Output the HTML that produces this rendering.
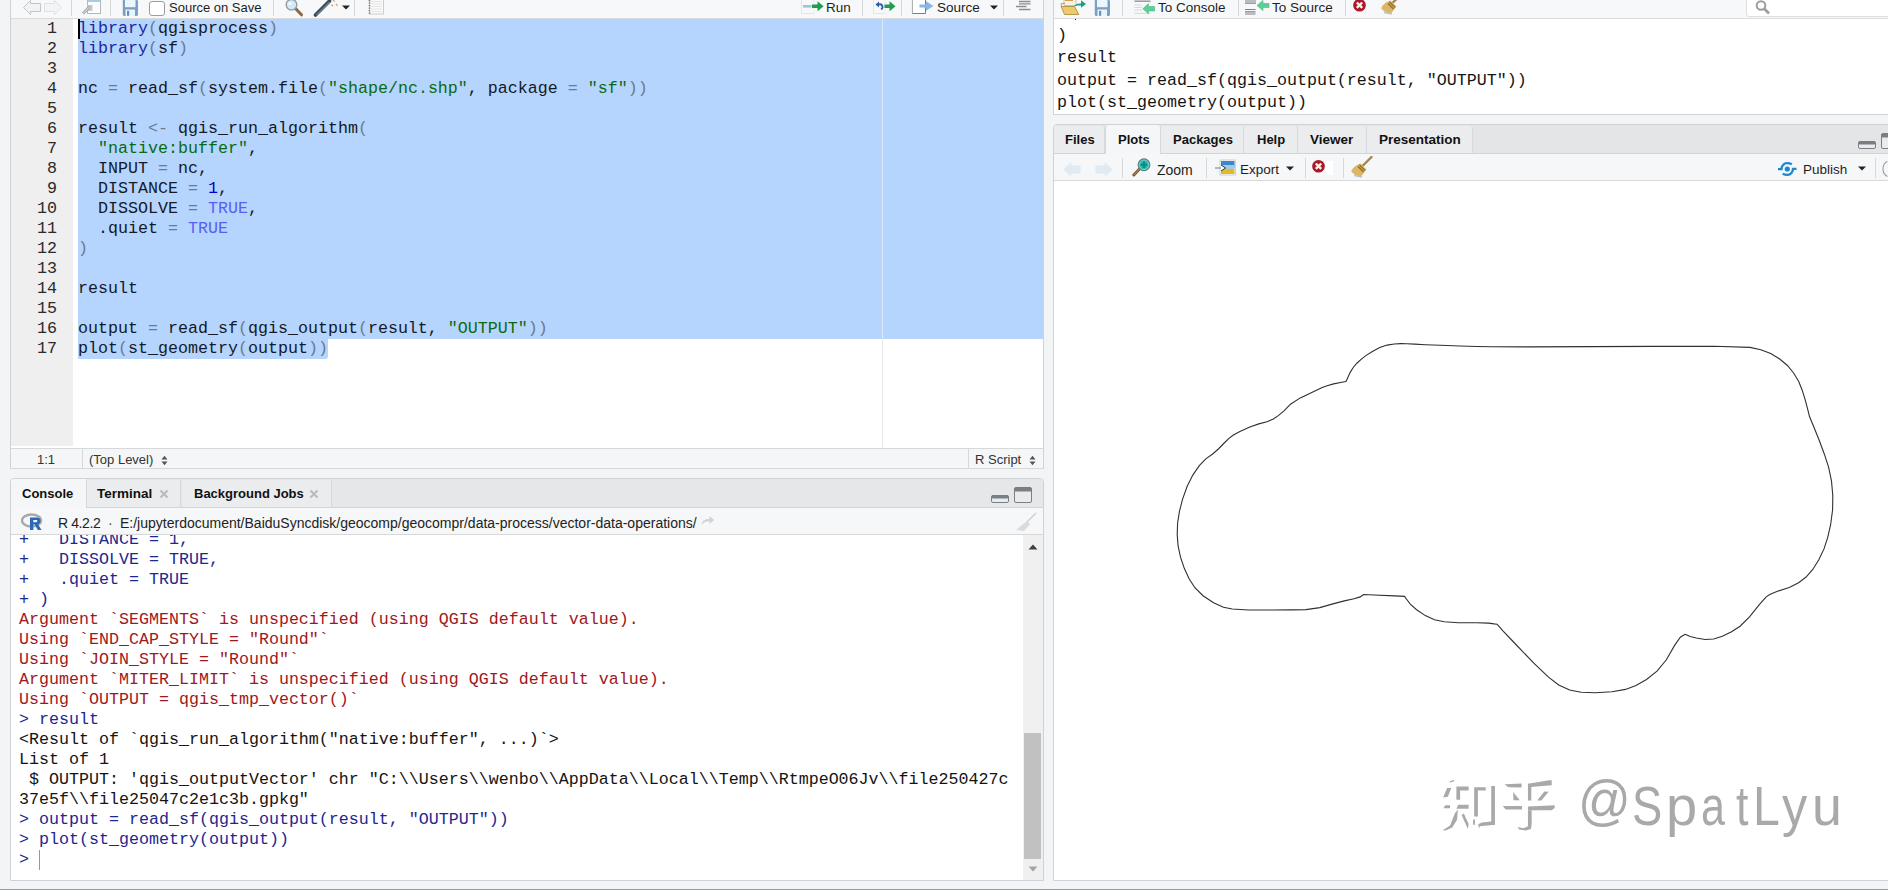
<!DOCTYPE html>
<html><head><meta charset="utf-8"><title>RStudio</title><style>
*{margin:0;padding:0;box-sizing:border-box}
html,body{width:1888px;height:890px;overflow:hidden;background:#f3f4f5;position:relative}
body{font-family:"Liberation Sans",sans-serif}
div,span,svg{position:absolute}
span.c{position:static}
.mono{font-family:"Liberation Mono",monospace;font-size:16.67px;white-space:pre;line-height:20px}
.ui{font-family:"Liberation Sans",sans-serif;font-size:13px;color:#1e1e1e;white-space:pre;line-height:16px}
.tabt{font-family:"Liberation Sans",sans-serif;font-size:13px;font-weight:bold;color:#111;white-space:pre;line-height:16px}
.kw{color:#1a28a0}.op{color:#6b7a8c}.str{color:#0a6a10}.num{color:#0000cd}.cst{color:#5a5ef0}.id{color:#141a28}
.in{color:#1c2890}.err{color:#a0181d}.out{color:#141414}
.sep{width:1px;background:#d8dadc}
.wm{font-family:"Liberation Sans",sans-serif;font-size:56px;line-height:56px;color:#a9a9a9;transform-origin:0 0;white-space:pre}
.ln{left:0;width:46px;text-align:right;color:#2a2a2a}
</style></head><body>
<div style="left:10px;top:-1px;width:1034px;height:470px;border:1px solid #d0d2d5;background:#fff"></div>
<div style="left:11px;top:0px;width:1032px;height:19px;background:#f6f8f9;border-bottom:1px solid #d9dbdd"></div>
<div style="left:11px;top:19px;width:62px;height:427px;background:#efefef"></div>
<div style="left:78px;top:19px;width:965px;height:320px;background:#b5d5ff"></div>
<div style="left:78px;top:339px;width:250px;height:20px;background:#b5d5ff;border-radius:0 0 3px 0"></div>
<div style="left:78px;top:19px;width:2px;height:20px;background:#000"></div>
<div class="mono" style="left:11px;top:19px;width:62px;height:400px"><div class="ln" style="top:0px">1</div><div class="ln" style="top:20px">2</div><div class="ln" style="top:40px">3</div><div class="ln" style="top:60px">4</div><div class="ln" style="top:80px">5</div><div class="ln" style="top:100px">6</div><div class="ln" style="top:120px">7</div><div class="ln" style="top:140px">8</div><div class="ln" style="top:160px">9</div><div class="ln" style="top:180px">10</div><div class="ln" style="top:200px">11</div><div class="ln" style="top:220px">12</div><div class="ln" style="top:240px">13</div><div class="ln" style="top:260px">14</div><div class="ln" style="top:280px">15</div><div class="ln" style="top:300px">16</div><div class="ln" style="top:320px">17</div></div>
<div class="mono" style="left:78px;top:19px;width:960px;height:400px"><div style="left:0;top:0px"><span class="c kw">library</span><span class="c op">(</span><span class="c id">qgisprocess</span><span class="c op">)</span></div><div style="left:0;top:20px"><span class="c kw">library</span><span class="c op">(</span><span class="c id">sf</span><span class="c op">)</span></div><div style="left:0;top:60px"><span class="c id">nc </span><span class="c op">=</span><span class="c id"> read_sf</span><span class="c op">(</span><span class="c id">system.file</span><span class="c op">(</span><span class="c str">&quot;shape/nc.shp&quot;</span><span class="c id">, package </span><span class="c op">=</span><span class="c id"> </span><span class="c str">&quot;sf&quot;</span><span class="c op">))</span></div><div style="left:0;top:100px"><span class="c id">result </span><span class="c op">&lt;-</span><span class="c id"> qgis_run_algorithm</span><span class="c op">(</span></div><div style="left:0;top:120px"><span class="c id">  </span><span class="c str">&quot;native:buffer&quot;</span><span class="c id">,</span></div><div style="left:0;top:140px"><span class="c id">  INPUT </span><span class="c op">=</span><span class="c id"> nc,</span></div><div style="left:0;top:160px"><span class="c id">  DISTANCE </span><span class="c op">=</span><span class="c id"> </span><span class="c num">1</span><span class="c id">,</span></div><div style="left:0;top:180px"><span class="c id">  DISSOLVE </span><span class="c op">=</span><span class="c id"> </span><span class="c cst">TRUE</span><span class="c id">,</span></div><div style="left:0;top:200px"><span class="c id">  .quiet </span><span class="c op">=</span><span class="c id"> </span><span class="c cst">TRUE</span></div><div style="left:0;top:220px"><span class="c op">)</span></div><div style="left:0;top:260px"><span class="c id">result</span></div><div style="left:0;top:300px"><span class="c id">output </span><span class="c op">=</span><span class="c id"> read_sf</span><span class="c op">(</span><span class="c id">qgis_output</span><span class="c op">(</span><span class="c id">result, </span><span class="c str">&quot;OUTPUT&quot;</span><span class="c op">))</span></div><div style="left:0;top:320px"><span class="c id">plot</span><span class="c op">(</span><span class="c id">st_geometry</span><span class="c op">(</span><span class="c id">output</span><span class="c op">))</span></div></div>
<div style="left:882px;top:19px;width:1px;height:320px;background:#dce8f8"></div>
<div style="left:882px;top:339px;width:1px;height:109px;background:#e6e7e8"></div>
<div style="left:11px;top:448px;width:1032px;height:21px;background:#f4f6f7;border-top:1px solid #d6d8da;border-bottom:1px solid #d6d8da"></div>
<div style="left:82px;top:449px;width:1px;height:19px;background:#d6d8da"></div>
<div style="left:968px;top:449px;width:1px;height:19px;background:#d6d8da"></div>
<div class="ui" style="left:37px;top:452px;color:#333">1:1</div>
<div class="ui" style="left:89px;top:452px;color:#333">(Top Level)</div>
<div class="ui" style="left:975px;top:452px;color:#333">R Script</div>
<svg style="left:161px;top:455px" width="7" height="11" viewBox="0 0 7 11"><path d="M0.5 4.5L3.5 0.8L6.5 4.5Z M0.5 6.5L3.5 10.2L6.5 6.5Z" fill="#555"/></svg>
<svg style="left:1029px;top:455px" width="7" height="11" viewBox="0 0 7 11"><path d="M0.5 4.5L3.5 0.8L6.5 4.5Z M0.5 6.5L3.5 10.2L6.5 6.5Z" fill="#555"/></svg>
<div style="left:71px;top:0px;width:1px;height:16px;background:#d5d7d9"></div>
<div style="left:110px;top:0px;width:1px;height:16px;background:#d5d7d9"></div>
<div style="left:273px;top:0px;width:1px;height:16px;background:#d5d7d9"></div>
<div style="left:354px;top:0px;width:1px;height:16px;background:#d5d7d9"></div>
<div style="left:862px;top:0px;width:1px;height:16px;background:#d5d7d9"></div>
<div style="left:901px;top:0px;width:1px;height:16px;background:#d5d7d9"></div>
<div style="left:1003px;top:0px;width:1px;height:16px;background:#d5d7d9"></div>
<div class="ui" style="left:169px;top:0px;font-size:13px">Source on Save</div>
<div style="left:149px;top:1px;width:16px;height:15px;background:#fff;border:1px solid #9a9ea2;border-radius:3px"></div>
<div class="ui" style="left:826px;top:0px;font-size:13.5px">Run</div>
<div class="ui" style="left:937px;top:0px;font-size:13.5px">Source</div>
<svg style="left:342px;top:5px" width="8" height="5" viewBox="0 0 8 5"><path d="M0 0.5H8L4 4.5Z" fill="#222"/></svg>
<svg style="left:990px;top:5px" width="8" height="5" viewBox="0 0 8 5"><path d="M0 0.5H8L4 4.5Z" fill="#222"/></svg>
<div style="left:10px;top:478px;width:1034px;height:403px;border:1px solid #d0d2d5;border-radius:4px 4px 0 0;background:#fff"></div>
<div style="left:11px;top:479px;width:1032px;height:28px;background:#e5e7e9;border-radius:3px 3px 0 0"></div>
<div style="left:11px;top:507px;width:1032px;height:1px;background:#d2d4d6"></div>
<div style="left:11px;top:479px;width:75px;height:29px;background:#f4f6f7;border-radius:3px 0 0 0"></div>
<div style="left:86px;top:480px;width:95px;height:27px;background:#ebecee;border-right:1px solid #d6d8da;border-left:1px solid #d6d8da"></div>
<div style="left:182px;top:480px;width:150px;height:27px;background:#ebecee;border-right:1px solid #d6d8da"></div>
<div class="tabt" style="left:22px;top:486px;">Console</div>
<div class="tabt" style="left:97px;top:486px;font-size:13.5px">Terminal</div>
<div class="tabt" style="left:194px;top:486px;">Background Jobs</div>
<svg style="left:159px;top:489px" width="10" height="10" viewBox="0 0 10 10"><path d="M1.5 1.5L8.5 8.5M8.5 1.5L1.5 8.5" stroke="#b8babc" stroke-width="2"/></svg>
<svg style="left:309px;top:489px" width="10" height="10" viewBox="0 0 10 10"><path d="M1.5 1.5L8.5 8.5M8.5 1.5L1.5 8.5" stroke="#b8babc" stroke-width="2"/></svg>
<svg style="left:991px;top:487px" width="42" height="17" viewBox="0 0 42 17"><rect x="0.5" y="8.5" width="17" height="7" rx="1.5" fill="#e9ecee" stroke="#7a7f83"/><rect x="0.5" y="8.5" width="17" height="3" rx="1" fill="#7a7f83"/><rect x="23.5" y="0.5" width="17" height="15" rx="1.5" fill="#e9ecee" stroke="#7a7f83"/><rect x="23.5" y="0.5" width="17" height="4" rx="1" fill="#7a7f83"/></svg>
<div style="left:11px;top:508px;width:1032px;height:27px;background:#f5f7f8"></div>
<div style="left:11px;top:534px;width:1032px;height:1px;background:#d6d8da"></div>
<svg style="left:21px;top:513px" width="22" height="18" viewBox="0 0 22 18"><ellipse cx="10.5" cy="7.5" rx="9.5" ry="6" fill="none" stroke="#a7a9ad" stroke-width="2.4"/><path d="M9 4.5H15.5C18.5 4.5 19.5 6 19.5 8C19.5 9.6 18.5 10.8 17 11.2L20.5 17H16.8L13.8 11.6H12.3V17H9Z M12.3 7V9.3H15C16 9.3 16.4 8.8 16.4 8.1C16.4 7.4 16 7 15 7Z" fill="#2a67b4" fill-rule="evenodd"/></svg>
<div class="ui" style="left:58px;top:515px;font-size:14px;letter-spacing:-0.4px;color:#222">R 4.2.2</div>
<div class="ui" style="left:108px;top:515px;font-size:14px;color:#444">·</div>
<div class="ui" style="left:120px;top:515px;font-size:14px;color:#222">E:/jupyterdocument/BaiduSyncdisk/geocomp/geocompr/data-process/vector-data-operations/</div>
<svg style="left:700px;top:515px" width="15" height="11" viewBox="0 0 15 11"><path d="M1.5 10C2 5.5 5 4 9.5 4V1L14 5L9.5 9V6.3C6 6.3 3.5 7.3 1.5 10Z" fill="#d0d3d6"/></svg>
<svg style="left:1012px;top:512px" width="26" height="20" viewBox="0 0 26 20"><path d="M24 1L15 10" stroke="#cfd2d4" stroke-width="1.6"/><path d="M15 9L18 12L12 19L4 18Z" fill="#d9dcde"/></svg>
<div style="left:11px;top:535px;width:1012px;height:345px;overflow:hidden;background:#fff"><div class="mono" style="left:8px;top:-5px;width:1000px;height:360px"><div class="in" style="left:0;top:0px">+   DISTANCE = 1,</div><div class="in" style="left:0;top:20px">+   DISSOLVE = TRUE,</div><div class="in" style="left:0;top:40px">+   .quiet = TRUE</div><div class="in" style="left:0;top:60px">+ )</div><div class="err" style="left:0;top:80px">Argument `SEGMENTS` is unspecified (using QGIS default value).</div><div class="err" style="left:0;top:100px">Using `END_CAP_STYLE = &quot;Round&quot;`</div><div class="err" style="left:0;top:120px">Using `JOIN_STYLE = &quot;Round&quot;`</div><div class="err" style="left:0;top:140px">Argument `MITER_LIMIT` is unspecified (using QGIS default value).</div><div class="err" style="left:0;top:160px">Using `OUTPUT = qgis_tmp_vector()`</div><div class="in" style="left:0;top:180px">&gt; result</div><div class="out" style="left:0;top:200px">&lt;Result of `qgis_run_algorithm(&quot;native:buffer&quot;, ...)`&gt;</div><div class="out" style="left:0;top:220px">List of 1</div><div class="out" style="left:0;top:240px"> $ OUTPUT: &#x27;qgis_outputVector&#x27; chr &quot;C:\\Users\\wenbo\\AppData\\Local\\Temp\\RtmpeO06Jv\\file250427c</div><div class="out" style="left:0;top:260px">37e5f\\file25047c2e1c3b.gpkg&quot;</div><div class="in" style="left:0;top:280px">&gt; output = read_sf(qgis_output(result, &quot;OUTPUT&quot;))</div><div class="in" style="left:0;top:300px">&gt; plot(st_geometry(output))</div><div class="in" style="left:0;top:320px">&gt; </div></div></div>
<div style="left:39px;top:850px;width:1px;height:20px;background:#999"></div>
<div style="left:1023px;top:535px;width:20px;height:345px;background:#f0f0f0"></div>
<div style="left:1024px;top:733px;width:17px;height:126px;background:#c1c1c1"></div>
<svg style="left:1028px;top:544px" width="10" height="6" viewBox="0 0 10 6"><path d="M0.5 5.5H9.5L5 0.5Z" fill="#404040"/></svg>
<svg style="left:1028px;top:866px" width="10" height="6" viewBox="0 0 10 6"><path d="M0.5 0.5H9.5L5 5.5Z" fill="#a3a3a3"/></svg>
<div style="left:1053px;top:-1px;width:840px;height:116px;border:1px solid #d0d2d5;background:#fff"></div>
<div style="left:1054px;top:0px;width:834px;height:19px;background:#f6f8f9;border-bottom:1px solid #d9dbdd"></div>
<div style="left:1122px;top:0px;width:1px;height:16px;background:#d5d7d9"></div>
<div style="left:1238px;top:0px;width:1px;height:16px;background:#d5d7d9"></div>
<div style="left:1345px;top:0px;width:1px;height:16px;background:#d5d7d9"></div>
<div class="ui" style="left:1158px;top:0px;font-size:13.5px">To Console</div>
<div class="ui" style="left:1272px;top:0px;font-size:13.5px">To Source</div>
<div style="left:1746px;top:-1px;width:150px;height:18px;background:#fff;border:1px solid #dcdee0;border-radius:0 0 0 3px"></div>
<svg style="left:1755px;top:0px" width="17" height="15" viewBox="0 0 17 15"><circle cx="6" cy="5.5" r="4.3" fill="none" stroke="#9a9da0" stroke-width="2"/><path d="M9 8.5L14 13.5" stroke="#9a9da0" stroke-width="2.6"/></svg>
<div style="left:1075px;top:19px;width:1px;height:1px;background:#222"></div>
<div class="mono" style="left:1057px;top:26px;color:#151515">)</div>
<div class="mono" style="left:1057px;top:48px;color:#151515">result</div>
<div class="mono" style="left:1057px;top:71px;color:#151515">output = read_sf(qgis_output(result, &quot;OUTPUT&quot;))</div>
<div class="mono" style="left:1057px;top:93px;color:#151515">plot(st_geometry(output))</div>
<div style="left:1053px;top:124px;width:840px;height:757px;border:1px solid #d0d2d5;border-radius:4px 0 0 0;background:#fff"></div>
<div style="left:1054px;top:125px;width:834px;height:28px;background:#e3e5e7;border-radius:3px 0 0 0"></div>
<div style="left:1054px;top:153px;width:834px;height:1px;background:#d2d4d6"></div>
<div style="left:1054px;top:126px;width:51px;height:27px;background:#ebecee;border-right:1px solid #d6d8da;border-radius:3px 3px 0 0"></div>
<div class="tabt" style="left:1065px;top:132px;">Files</div>
<div style="left:1105px;top:125px;width:56px;height:29px;background:#f4f6f7;border-left:1px solid #d6d8da;border-right:1px solid #d6d8da;border-radius:3px 3px 0 0"></div>
<div class="tabt" style="left:1118px;top:132px;">Plots</div>
<div style="left:1161px;top:126px;width:83px;height:27px;background:#ebecee;border-right:1px solid #d6d8da;border-radius:3px 3px 0 0"></div>
<div class="tabt" style="left:1173px;top:132px;">Packages</div>
<div style="left:1244px;top:126px;width:54px;height:27px;background:#ebecee;border-right:1px solid #d6d8da;border-radius:3px 3px 0 0"></div>
<div class="tabt" style="left:1257px;top:132px;">Help</div>
<div style="left:1298px;top:126px;width:69px;height:27px;background:#ebecee;border-right:1px solid #d6d8da;border-radius:3px 3px 0 0"></div>
<div class="tabt" style="left:1310px;top:132px;font-size:13.5px">Viewer</div>
<div style="left:1367px;top:126px;width:106px;height:27px;background:#ebecee;border-right:1px solid #d6d8da;border-radius:3px 3px 0 0"></div>
<div class="tabt" style="left:1379px;top:132px;font-size:13.5px">Presentation</div>
<svg style="left:1858px;top:133px" width="42" height="17" viewBox="0 0 42 17"><rect x="0.5" y="8.5" width="17" height="7" rx="1.5" fill="#e9ecee" stroke="#7a7f83"/><rect x="0.5" y="8.5" width="17" height="3" rx="1" fill="#7a7f83"/><rect x="23.5" y="0.5" width="17" height="15" rx="1.5" fill="#e9ecee" stroke="#7a7f83"/><rect x="23.5" y="0.5" width="17" height="4" rx="1" fill="#7a7f83"/></svg>
<div style="left:1054px;top:154px;width:834px;height:26px;background:#f5f7f8"></div>
<div style="left:1054px;top:180px;width:834px;height:1px;background:#d6d8da"></div>
<div style="left:1122px;top:158px;width:1px;height:20px;background:#d5d7d9"></div>
<div style="left:1206px;top:158px;width:1px;height:20px;background:#d5d7d9"></div>
<div style="left:1305px;top:158px;width:1px;height:20px;background:#d5d7d9"></div>
<div style="left:1343px;top:158px;width:1px;height:20px;background:#d5d7d9"></div>
<div style="left:1875px;top:158px;width:1px;height:20px;background:#d5d7d9"></div>
<div class="ui" style="left:1157px;top:162px;font-size:14px">Zoom</div>
<div class="ui" style="left:1240px;top:162px;font-size:13.5px">Export</div>
<div class="ui" style="left:1803px;top:162px;font-size:13.5px">Publish</div>
<svg style="left:1286px;top:166px" width="8" height="5" viewBox="0 0 8 5"><path d="M0 0.5H8L4 4.5Z" fill="#222"/></svg>
<svg style="left:1858px;top:166px" width="8" height="5" viewBox="0 0 8 5"><path d="M0 0.5H8L4 4.5Z" fill="#222"/></svg>
<svg style="left:0;top:0" width="1888" height="890" viewBox="0 0 1888 890"><path d="M1491.7 346.8 L1477.0 346.5 L1459.9 346.0 L1440.4 345.3 L1425.3 344.7 L1414.7 344.1 L1406.6 343.7 L1400.8 343.6 L1394.3 344.0 L1387.1 345.1 L1379.7 347.6 L1372.4 351.5 L1366.2 355.4 L1361.4 359.1 L1357.1 363.0 L1353.6 367.0 L1350.3 372.1 L1347.4 378.4 L1345.9 381.5 L1341.8 382.3 L1333.7 383.9 L1327.1 385.7 L1322.2 387.6 L1313.3 391.7 L1300.3 397.9 L1290.5 404.2 L1284.0 410.8 L1278.3 415.6 L1273.4 419.0 L1266.9 421.7 L1258.8 423.9 L1249.8 427.1 L1239.9 431.5 L1233.0 435.2 L1229.0 438.4 L1224.2 443.0 L1218.4 449.0 L1212.3 454.2 L1205.8 458.8 L1199.3 465.7 L1192.8 475.1 L1187.2 486.3 L1182.5 499.4 L1179.4 511.6 L1177.6 523.0 L1177.2 534.4 L1178.1 545.8 L1180.5 557.2 L1184.4 568.6 L1189.1 578.8 L1194.9 587.7 L1203.0 595.7 L1213.6 602.7 L1223.4 607.2 L1232.3 609.0 L1248.6 610.0 L1272.2 610.0 L1291.3 609.9 L1306.0 609.6 L1319.8 607.6 L1332.9 603.9 L1344.3 600.9 L1354.1 598.8 L1360.2 596.9 L1362.6 595.3 L1363.8 594.5 L1374.0 595.0 L1394.3 595.9 L1404.5 596.4 L1406.4 599.0 L1410.3 604.1 L1416.6 609.7 L1425.3 615.6 L1434.5 619.7 L1444.2 621.8 L1458.2 622.8 L1476.5 622.8 L1488.5 623.1 L1494.2 623.9 L1497.0 624.2 L1499.0 626.4 L1502.9 630.8 L1514.5 643.0 L1533.8 663.1 L1548.5 677.1 L1558.7 685.0 L1569.6 690.0 L1581.2 692.2 L1595.3 692.8 L1612.0 691.8 L1625.5 689.4 L1636.0 685.6 L1646.5 679.5 L1657.0 671.1 L1666.4 659.8 L1674.6 645.4 L1680.3 637.2 L1683.5 635.3 L1685.0 634.3 L1686.8 635.0 L1690.2 636.5 L1696.3 638.0 L1705.1 639.5 L1713.7 639.0 L1722.3 636.3 L1731.1 632.0 L1740.1 626.2 L1749.5 616.9 L1759.5 604.3 L1766.2 596.8 L1769.8 594.5 L1777.4 591.3 L1789.2 587.4 L1798.6 582.7 L1805.8 577.3 L1812.6 569.7 L1818.8 559.8 L1824.0 548.9 L1827.8 537.2 L1830.7 524.2 L1832.6 509.7 L1832.8 495.4 L1831.5 481.1 L1828.6 467.2 L1824.2 453.7 L1818.8 439.2 L1812.6 424.0 L1809.4 416.3 L1808.1 410.9 L1805.3 400.1 L1802.2 390.2 L1798.6 381.3 L1793.6 373.0 L1787.4 365.5 L1779.7 359.0 L1770.7 353.6 L1760.8 349.7 L1750.0 347.4 L1714.0 346.3 L1652.9 346.4 L1591.5 346.6 L1529.8 346.9Z" fill="none" stroke="#303030" stroke-width="1.1"/></svg>
<svg style="left:1436px;top:772px" width="130" height="66" viewBox="0 0 1753 890"><g fill="#a9a9a9"><path d="M180 128L245 105L240 128L188 142Z"/><path d="M95 345L150 215L205 215L160 335Z"/><path d="M275 195H440V250H325V375H275Z"/><path d="M100 490L125 450H190V490Z"/><path d="M275 495L300 440H440V495Z"/><path d="M90 785L190 720L255 555L295 505L285 640L220 750L130 790Z"/><path d="M345 580L375 560L440 700L430 770Z"/><path d="M515 205H670V250H565V600H515Z"/><path d="M745 190H795V710L745 712Z"/><path d="M570 705L620 680L795 660V710L590 732L580 770Z"/><path d="M500 640L525 640L525 710L500 710Z"/><path d="M925 165L1155 155V210L975 205Z"/><path d="M1240 160L1525 112L1560 110V180L1240 205Z"/><path d="M1240 160H1285V385H1240Z"/><path d="M1040 270L1130 380H1045Z"/><path d="M1365 385L1460 262L1520 265L1420 385Z"/><path d="M900 460H1160V505H940Z"/><path d="M1240 465L1600 450V485L1560 515H1240Z"/><path d="M1240 515H1290V700L1280 770L1210 790L1120 775L1100 740L1180 758L1240 730Z"/></g></svg><div class="wm" style="left:1577.6px;top:772px;transform:scaleX(0.93)">@</div><div class="wm" style="left:1631.6px;top:778px;transform:scaleX(0.81)">S</div><div class="wm" style="left:1666px;top:778px;transform:scaleX(1.0)">p</div><div class="wm" style="left:1700.5px;top:778px;transform:scaleX(0.77)">a</div><div class="wm" style="left:1735.7px;top:778px;transform:scaleX(0.8)">t</div><div class="wm" style="left:1752.6px;top:778px;transform:scaleX(0.86)">L</div><div class="wm" style="left:1782.3px;top:778px;transform:scaleX(0.9)">y</div><div class="wm" style="left:1811.5px;top:778px;transform:scaleX(0.96)">u</div>
<svg style="left:22px;top:0px" width="20" height="16" viewBox="0 0 20 16"><path d="M1.5 7.5L8.5 0.5V3.5H18.5V11.5H8.5V14.5Z" fill="#f1f2f3" stroke="#c3c5c7" stroke-width="1"/></svg>
<svg style="left:43px;top:0px" width="20" height="16" viewBox="0 0 20 16"><path d="M18.5 7.5L11.5 0.5V3.5H1.5V11.5H11.5V14.5Z" fill="#f3f4f5" stroke="#dfe1e3" stroke-width="1"/></svg>
<svg style="left:81px;top:0px" width="22" height="16" viewBox="0 0 22 16"><rect x="6.5" y="-1" width="13" height="14.5" fill="#fbfcfd" stroke="#b5b8bb"/><rect x="7" y="-1" width="12" height="3" fill="#a9cde0"/><rect x="6.5" y="5" width="5" height="6" fill="#c9cbcd"/><path d="M2 13.5L9 6.5" stroke="#9ea2a5" stroke-width="2.6"/><path d="M2 13.5L9 6.5" stroke="#f2f3f4" stroke-width="1"/></svg>
<svg style="left:122px;top:0px" width="17" height="17" viewBox="0 0 17 17"><path d="M0.8 -1H14.2L16 1V14.5C16 15.3 15.3 16 14.5 16H2.3C1.5 16 0.8 15.3 0.8 14.5Z" fill="#7d9fc2"/><rect x="3" y="-1" width="10.5" height="8.2" fill="#eaf7fd"/><rect x="3.5" y="9.5" width="9.5" height="6.5" fill="#e6f6fc"/><rect x="5" y="10.8" width="2.2" height="5" fill="#6f8fae"/></svg>
<svg style="left:284px;top:0px" width="22" height="17" viewBox="0 0 22 17"><path d="M11.5 8.5L17.5 14.8" stroke="#8a6a48" stroke-width="3" stroke-linecap="round"/><circle cx="7.5" cy="4.8" r="5.3" fill="#d4e9f7" stroke="#8f9ea8" stroke-width="1.4"/><ellipse cx="6" cy="3.5" rx="2.2" ry="1.6" fill="#eef7fd"/></svg>
<svg style="left:312px;top:0px" width="30" height="17" viewBox="0 0 30 17"><path d="M3.5 15L17.5 1" stroke="#3d4b58" stroke-width="3.6" stroke-linecap="round"/><path d="M4.5 15L17.5 2" stroke="#8ba0b0" stroke-width="1"/><path d="M21 -0.5L22.5 1.5M24 4L25.5 5.8M19.5 4.5L21 6.2" stroke="#d9a27a" stroke-width="1.3"/></svg>
<svg style="left:367px;top:0px" width="18" height="16" viewBox="0 0 18 16"><rect x="2.5" y="-1" width="14" height="15" fill="#fafafa" stroke="#c9cbcd"/><path d="M4 1.5H15M4 4H15M4 6.5H15M4 9H15M4 11.5H15" stroke="#dcdedf" stroke-width="0.8"/><path d="M2.5 0V14" stroke="#777" stroke-width="1.6" stroke-dasharray="1.2 1.3"/></svg>
<svg style="left:800px;top:0px" width="26" height="16" viewBox="0 0 26 16"><path d="M1.5 0V13.5H14" fill="none" stroke="#e3e5e7"/><path d="M14 0V13.5" stroke="#eceeef"/><rect x="3" y="5" width="8.5" height="2.6" fill="#9cc6dc"/><path d="M12 4.5H17.5V1.2L23.6 6.3L17.5 11.2V8H12Z" fill="#1e9d4f"/></svg>
<svg style="left:872px;top:0px" width="26" height="16" viewBox="0 0 26 16"><path d="M1.5 0V13.5H13" fill="none" stroke="#e3e5e7"/><path d="M13 0V13.5" stroke="#eceeef"/><path d="M9 9.2C10.6 8.6 11 6.6 10 5.3C9.2 4.2 7.5 4.2 6.2 4.6" fill="none" stroke="#2a5aa8" stroke-width="1.9"/><path d="M3.5 4.6L7 1.4V7.6Z" fill="#2a5aa8"/><path d="M12.5 4.5H17.5V1.2L23.5 6.3L17.5 11.2V8H12.5Z" fill="#1e9d4f"/></svg>
<svg style="left:911px;top:0px" width="24" height="16" viewBox="0 0 24 16"><path d="M1.5 -1V13.5H14.5V-1" fill="#fff" stroke="#7b7e82" stroke-width="1"/><path d="M1 -1V13" stroke="#e6e8ea" stroke-width="1"/><path d="M8.5 4.5H15V1.2L22.5 6L15 10.8V7.5H8.5Z" fill="#8ab6e2"/></svg>
<svg style="left:1015px;top:0px" width="17" height="14" viewBox="0 0 17 14"><path d="M4 1.5H15.5M4 3.8H15.5M1 6.5H11.5M4 9.5H15.5" stroke="#8a8d90" stroke-width="1.3"/></svg>
<svg style="left:1059px;top:0px" width="30" height="17" viewBox="0 0 30 17"><rect x="5" y="-1" width="12" height="6.5" fill="#f8f4ea" stroke="#c9b68a" stroke-width="0.8"/><rect x="6" y="-1" width="8" height="2" fill="#d59a50"/><path d="M2.2 6.5H15.5L19.8 14.5H5.5Z" fill="#e9cc6d" stroke="#b8964f" stroke-width="1"/><path d="M2.2 6.5V3.5H6" fill="none" stroke="#b8964f" stroke-width="0.9"/><path d="M14.5 6.8C16 4.2 18.5 3.2 22 3.4V0.2L27 4L22 7.8V5.6C19 5.4 16.8 6 14.5 6.8Z" fill="#1f9d86"/></svg>
<svg style="left:1094px;top:0px" width="17" height="17" viewBox="0 0 17 17"><path d="M0.8 -1H14.2L16 1V14.5C16 15.3 15.3 16 14.5 16H2.3C1.5 16 0.8 15.3 0.8 14.5Z" fill="#7d9fc2"/><rect x="3" y="-1" width="10.5" height="8.2" fill="#eaf7fd"/><rect x="3.5" y="9.5" width="9.5" height="6.5" fill="#e6f6fc"/><rect x="5" y="10.8" width="2.2" height="5" fill="#6f8fae"/></svg>
<svg style="left:1133px;top:0px" width="24" height="16" viewBox="0 0 24 16"><path d="M1.5 1.2H17.5" stroke="#9da0a3" stroke-width="1.6"/><path d="M1.5 5H9M1.5 7.5H9M1.5 10H9M1.5 13.3H17.5" stroke="#d5d7d9" stroke-width="1"/><path d="M21.5 6.5H15.5V3.6L9.8 8.8L15.5 13.8V11H21.5Z" fill="#5ccf98" stroke="#49b983" stroke-width="0.6"/></svg>
<svg style="left:1244px;top:0px" width="26" height="16" viewBox="0 0 26 16"><path d="M1 1H12M1 3.2H12M1 9.5H11.5M1 11.8H11.5M1 14H11.5" stroke="#7e8184" stroke-width="1.2"/><path d="M25 3.5H19V0.5L13 5.5L19 10.5V7.5H25Z" fill="#5ccf98" stroke="#49b983" stroke-width="0.6"/></svg>
<svg style="left:1352px;top:-2px" width="16" height="16" viewBox="0 0 16 16"><circle cx="7.5" cy="7.2" r="6.3" fill="#a8192a"/><path d="M4.8 4.5L10.2 9.9M10.2 4.5L4.8 9.9" stroke="#fbf3e6" stroke-width="2.4"/></svg>
<svg style="left:1380px;top:-7px" width="24" height="22" viewBox="0 0 24 22"><path d="M21.5 1L13 9.5" stroke="#a98552" stroke-width="2.4" stroke-linecap="round"/><path d="M10.5 7.5L16.5 13.5L11 20.5C8 20.5 3.5 18.5 1.2 15.5C2 12.5 5 9.5 10.5 7.5Z" fill="#dcb666"/><path d="M9.5 9L15 14.5M8 10.5L13.5 16" stroke="#8e6a22" stroke-width="1.1"/><path d="M4 19.5L12 21" stroke="#b9c3cc" stroke-width="1.4"/></svg>
<svg style="left:1062px;top:161px" width="20" height="17" viewBox="0 0 20 17"><path d="M1.5 8.5L9 1.5V4.5H18.5V12.5H9V15.5Z" fill="#dfeaf3" stroke="#e9f0f6" stroke-width="0.8"/></svg>
<svg style="left:1094px;top:161px" width="20" height="17" viewBox="0 0 20 17"><path d="M18.5 8.5L11 1.5V4.5H1.5V12.5H11V15.5Z" fill="#dfeaf3" stroke="#e9f0f6" stroke-width="0.8"/></svg>
<svg style="left:1131px;top:157px" width="22" height="21" viewBox="0 0 22 21"><path d="M8.5 12L2.8 18" stroke="#7a5a38" stroke-width="3" stroke-linecap="round"/><path d="M8.5 12L2.8 18" stroke="#b89468" stroke-width="1"/><circle cx="13" cy="7.8" r="5.8" fill="#2cb9b0" stroke="#5d7f86" stroke-width="1.3"/><path d="M13 4.5V11M9.8 7.8H16.2" stroke="#0b8a80" stroke-width="2.2"/><circle cx="13" cy="7.8" r="4.8" fill="none" stroke="#9ae8e2" stroke-width="0.6"/></svg>
<svg style="left:1214px;top:159px" width="24" height="19" viewBox="0 0 24 19"><rect x="6" y="1" width="15.5" height="15" fill="#f4f8fb" stroke="#c4c9ce" stroke-width="0.8"/><rect x="7" y="2" width="13.5" height="7" fill="#3f86c8"/><rect x="7" y="6" width="13.5" height="4" fill="#9ecbe8"/><rect x="7" y="10" width="13.5" height="5" fill="#e8b820"/><path d="M1 9H9" stroke="#8ea0b0" stroke-width="1.4"/><path d="M7 6L11.5 9L7 12" fill="#fff" stroke="#333" stroke-width="1"/></svg>
<svg style="left:1311px;top:159px" width="16" height="16" viewBox="0 0 16 16"><circle cx="7.5" cy="7.2" r="6.3" fill="#a8192a"/><path d="M4.8 4.5L10.2 9.9M10.2 4.5L4.8 9.9" stroke="#fbf3e6" stroke-width="2.4"/></svg>
<svg style="left:1326px;top:161px" width="7" height="14" viewBox="0 0 7 14"><rect x="0" y="0" width="7" height="14" fill="#fff"/></svg>
<svg style="left:1350px;top:156px" width="24" height="22" viewBox="0 0 24 22"><path d="M21.5 1L13 9.5" stroke="#a98552" stroke-width="2.4" stroke-linecap="round"/><path d="M10.5 7.5L16.5 13.5L11 20.5C8 20.5 3.5 18.5 1.2 15.5C2 12.5 5 9.5 10.5 7.5Z" fill="#dcb666"/><path d="M9.5 9L15 14.5M8 10.5L13.5 16" stroke="#8e6a22" stroke-width="1.1"/><path d="M4 19.5L12 21" stroke="#b9c3cc" stroke-width="1.4"/></svg>
<svg style="left:1776px;top:160px" width="23" height="18" viewBox="0 0 23 18"><path d="M2 9.2H5.5C5.5 6 7.8 3.2 11 3.2C13 3.2 14.5 3.6 15.8 4.3" fill="none" stroke="#1b87d0" stroke-width="2.3"/><path d="M20.5 8.8H17C17 12 14.7 14.8 11.5 14.8C9.5 14.8 8 14.4 6.7 13.7" fill="none" stroke="#1b87d0" stroke-width="2.3"/><circle cx="11.3" cy="9" r="2.6" fill="#1b87d0"/></svg>
<svg style="left:1880px;top:160px" width="8" height="18" viewBox="0 0 8 18"><path d="M7.5 1.5C4 3 3 6 3 9C3 12 4 15 7.5 16.5" fill="none" stroke="#9aa3ad" stroke-width="1.2"/></svg>
<div style="left:0px;top:889px;width:1888px;height:1px;background:#9a9ea2"></div>
</body></html>
